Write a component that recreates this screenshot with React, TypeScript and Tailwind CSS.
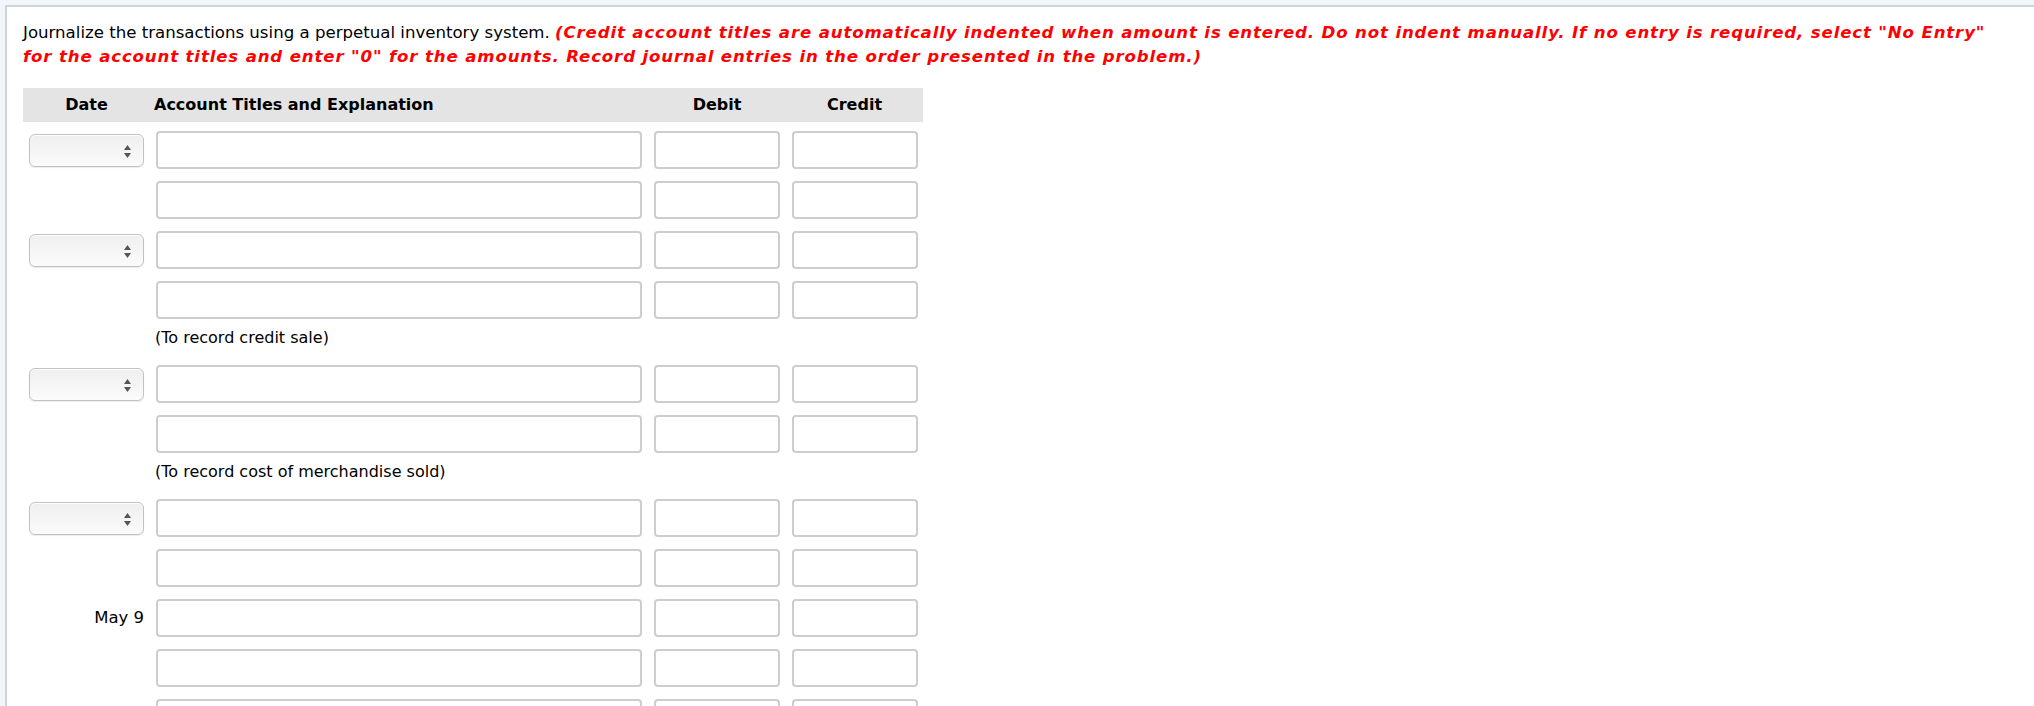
import React from 'react';

type Row =
  | { kind: 'entry'; date?: 'select' | string }
  | { kind: 'note'; text: string };

const rows: Row[] = [
  { kind: 'entry', date: 'select' },
  { kind: 'entry' },
  { kind: 'entry', date: 'select' },
  { kind: 'entry' },
  { kind: 'note', text: '(To record credit sale)' },
  { kind: 'entry', date: 'select' },
  { kind: 'entry' },
  { kind: 'note', text: '(To record cost of merchandise sold)' },
  { kind: 'entry', date: 'select' },
  { kind: 'entry' },
  { kind: 'entry', date: 'May 9' },
  { kind: 'entry' },
  { kind: 'entry' },
  { kind: 'entry' },
];

function DateSelect() {
  return (
    <div className="relative h-[33px] w-[115px] rounded-[6px] border border-[#c2c2c2] bg-gradient-to-b from-[#efefef] to-[#fbfbfb] shadow-[inset_0_1px_0_#ffffff,0_1px_1px_rgba(0,0,0,0.08)]">
      <svg
        className="absolute right-[12px] top-[10px]"
        width="7"
        height="13"
        viewBox="0 0 7 13"
      >
        <path d="M3.5 0 L7 5 L0 5 Z" fill="#555" />
        <path d="M0 8 L7 8 L3.5 13 Z" fill="#555" />
      </svg>
    </div>
  );
}

function Field() {
  return <div className="h-[38px] w-full rounded-[4px] border-2 border-[#cdcdcd] bg-white" />;
}

export default function App() {
  return (
    <div className="h-[706px] overflow-hidden bg-[#f3f6f9] pl-[5px] pt-[5px] font-['DejaVu_Sans',Verdana,sans-serif] text-[16px] text-black">
      <div className="min-h-[720px] border-l-2 border-t-2 border-[#cbd5df] bg-white pl-[16px] pt-[14px]">
        <p className="text-[16.6px] leading-[24px]">
          Journalize the transactions using a perpetual inventory system.{' '}
          <span className="font-bold italic tracking-[0.85px] text-[#ff0000]">
            (Credit account titles are automatically indented when amount is entered. Do not indent manually. If no
            entry is required, select "No Entry"
            <br />
            for the account titles and enter "0" for the amounts. Record journal entries in the order presented in the
            problem.)
          </span>
        </p>

        <div className="mt-[19px] w-[900px]">
          {/* header */}
          <div className="grid h-[34px] grid-cols-[127px_498px_138px_137px] items-center bg-[#e4e4e4] font-bold">
            <div className="text-center">Date</div>
            <div className="pl-[4px]">Account Titles and Explanation</div>
            <div className="text-center">Debit</div>
            <div className="text-center">Credit</div>
          </div>

          <div className="mt-[3px]">
            {rows.map((row, i) =>
              row.kind === 'note' ? (
                <div key={i} className="grid h-[34px] grid-cols-[127px_498px_138px_137px]">
                  <div />
                  <div className="pl-[5px] pt-px leading-[24px]">{row.text}</div>
                </div>
              ) : (
                <div key={i} className="grid h-[50px] grid-cols-[127px_498px_138px_137px] items-center">
                  <div className="flex justify-end px-[6px]">
                    {row.date === 'select' ? (
                      <DateSelect />
                    ) : row.date ? (
                      <span className="text-[16.5px]">{row.date}</span>
                    ) : null}
                  </div>
                  <div className="px-[6px]">
                    <Field />
                  </div>
                  <div className="px-[6px]">
                    <Field />
                  </div>
                  <div className="pl-[6px] pr-[5px]">
                    <Field />
                  </div>
                </div>
              ),
            )}
          </div>
        </div>
      </div>
    </div>
  );
}
